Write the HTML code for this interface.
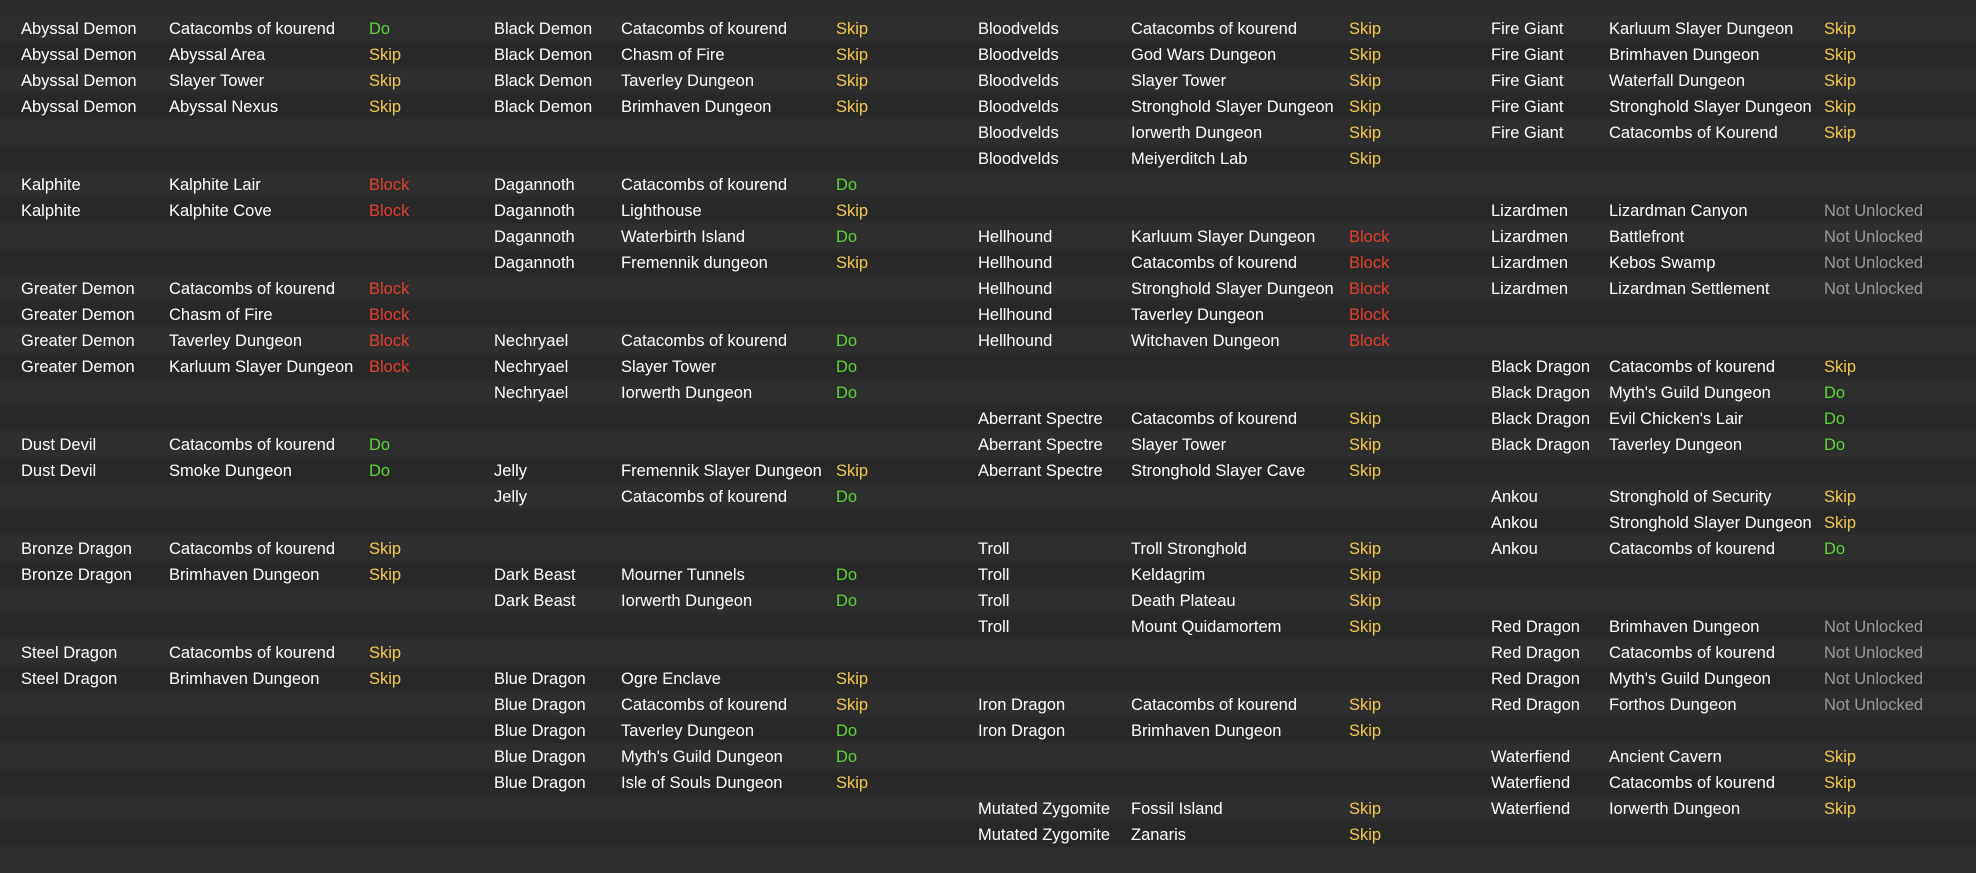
<!DOCTYPE html>
<html><head><meta charset="utf-8"><style>
html,body{margin:0;padding:0;width:1976px;height:861px;overflow:hidden;background:#2a2a2a;font-family:"Liberation Sans",Arial,sans-serif;font-size:16.5px;color:#fff}
.r{position:absolute;left:0;width:1976px;height:26px;line-height:23px;background:#2e2e2e}
.r:nth-child(even){background:#282828}
.r span{position:absolute;top:3px;white-space:nowrap}
.a{left:21px}.b{left:169px}.c{left:369px}
.d{left:494px}.e{left:621px}.f{left:836px}
.g{left:978px}.h{left:1131px}.i{left:1349px}
.j{left:1491px}.k{left:1609px}.l{left:1824px}
.D{color:#5bd636}.S{color:#f4c84e}.B{color:#e5402e}.N{color:#9a9a9a}
</style></head><body><div id="t">
<div class="r" style="top:15px"><span class="a">Abyssal Demon</span><span class="b">Catacombs of kourend</span><span class="c D">Do</span><span class="d">Black Demon</span><span class="e">Catacombs of kourend</span><span class="f S">Skip</span><span class="g">Bloodvelds</span><span class="h">Catacombs of kourend</span><span class="i S">Skip</span><span class="j">Fire Giant</span><span class="k">Karluum Slayer Dungeon</span><span class="l S">Skip</span></div>
<div class="r" style="top:41px"><span class="a">Abyssal Demon</span><span class="b">Abyssal Area</span><span class="c S">Skip</span><span class="d">Black Demon</span><span class="e">Chasm of Fire</span><span class="f S">Skip</span><span class="g">Bloodvelds</span><span class="h">God Wars Dungeon</span><span class="i S">Skip</span><span class="j">Fire Giant</span><span class="k">Brimhaven Dungeon</span><span class="l S">Skip</span></div>
<div class="r" style="top:67px"><span class="a">Abyssal Demon</span><span class="b">Slayer Tower</span><span class="c S">Skip</span><span class="d">Black Demon</span><span class="e">Taverley Dungeon</span><span class="f S">Skip</span><span class="g">Bloodvelds</span><span class="h">Slayer Tower</span><span class="i S">Skip</span><span class="j">Fire Giant</span><span class="k">Waterfall Dungeon</span><span class="l S">Skip</span></div>
<div class="r" style="top:93px"><span class="a">Abyssal Demon</span><span class="b">Abyssal Nexus</span><span class="c S">Skip</span><span class="d">Black Demon</span><span class="e">Brimhaven Dungeon</span><span class="f S">Skip</span><span class="g">Bloodvelds</span><span class="h">Stronghold Slayer Dungeon</span><span class="i S">Skip</span><span class="j">Fire Giant</span><span class="k">Stronghold Slayer Dungeon</span><span class="l S">Skip</span></div>
<div class="r" style="top:119px"><span class="g">Bloodvelds</span><span class="h">Iorwerth Dungeon</span><span class="i S">Skip</span><span class="j">Fire Giant</span><span class="k">Catacombs of Kourend</span><span class="l S">Skip</span></div>
<div class="r" style="top:145px"><span class="g">Bloodvelds</span><span class="h">Meiyerditch Lab</span><span class="i S">Skip</span></div>
<div class="r" style="top:171px"><span class="a">Kalphite</span><span class="b">Kalphite Lair</span><span class="c B">Block</span><span class="d">Dagannoth</span><span class="e">Catacombs of kourend</span><span class="f D">Do</span></div>
<div class="r" style="top:197px"><span class="a">Kalphite</span><span class="b">Kalphite Cove</span><span class="c B">Block</span><span class="d">Dagannoth</span><span class="e">Lighthouse</span><span class="f S">Skip</span><span class="j">Lizardmen</span><span class="k">Lizardman Canyon</span><span class="l N">Not Unlocked</span></div>
<div class="r" style="top:223px"><span class="d">Dagannoth</span><span class="e">Waterbirth Island</span><span class="f D">Do</span><span class="g">Hellhound</span><span class="h">Karluum Slayer Dungeon</span><span class="i B">Block</span><span class="j">Lizardmen</span><span class="k">Battlefront</span><span class="l N">Not Unlocked</span></div>
<div class="r" style="top:249px"><span class="d">Dagannoth</span><span class="e">Fremennik dungeon</span><span class="f S">Skip</span><span class="g">Hellhound</span><span class="h">Catacombs of kourend</span><span class="i B">Block</span><span class="j">Lizardmen</span><span class="k">Kebos Swamp</span><span class="l N">Not Unlocked</span></div>
<div class="r" style="top:275px"><span class="a">Greater Demon</span><span class="b">Catacombs of kourend</span><span class="c B">Block</span><span class="g">Hellhound</span><span class="h">Stronghold Slayer Dungeon</span><span class="i B">Block</span><span class="j">Lizardmen</span><span class="k">Lizardman Settlement</span><span class="l N">Not Unlocked</span></div>
<div class="r" style="top:301px"><span class="a">Greater Demon</span><span class="b">Chasm of Fire</span><span class="c B">Block</span><span class="g">Hellhound</span><span class="h">Taverley Dungeon</span><span class="i B">Block</span></div>
<div class="r" style="top:327px"><span class="a">Greater Demon</span><span class="b">Taverley Dungeon</span><span class="c B">Block</span><span class="d">Nechryael</span><span class="e">Catacombs of kourend</span><span class="f D">Do</span><span class="g">Hellhound</span><span class="h">Witchaven Dungeon</span><span class="i B">Block</span></div>
<div class="r" style="top:353px"><span class="a">Greater Demon</span><span class="b">Karluum Slayer Dungeon</span><span class="c B">Block</span><span class="d">Nechryael</span><span class="e">Slayer Tower</span><span class="f D">Do</span><span class="j">Black Dragon</span><span class="k">Catacombs of kourend</span><span class="l S">Skip</span></div>
<div class="r" style="top:379px"><span class="d">Nechryael</span><span class="e">Iorwerth Dungeon</span><span class="f D">Do</span><span class="j">Black Dragon</span><span class="k">Myth's Guild Dungeon</span><span class="l D">Do</span></div>
<div class="r" style="top:405px"><span class="g">Aberrant Spectre</span><span class="h">Catacombs of kourend</span><span class="i S">Skip</span><span class="j">Black Dragon</span><span class="k">Evil Chicken's Lair</span><span class="l D">Do</span></div>
<div class="r" style="top:431px"><span class="a">Dust Devil</span><span class="b">Catacombs of kourend</span><span class="c D">Do</span><span class="g">Aberrant Spectre</span><span class="h">Slayer Tower</span><span class="i S">Skip</span><span class="j">Black Dragon</span><span class="k">Taverley Dungeon</span><span class="l D">Do</span></div>
<div class="r" style="top:457px"><span class="a">Dust Devil</span><span class="b">Smoke Dungeon</span><span class="c D">Do</span><span class="d">Jelly</span><span class="e">Fremennik Slayer Dungeon</span><span class="f S">Skip</span><span class="g">Aberrant Spectre</span><span class="h">Stronghold Slayer Cave</span><span class="i S">Skip</span></div>
<div class="r" style="top:483px"><span class="d">Jelly</span><span class="e">Catacombs of kourend</span><span class="f D">Do</span><span class="j">Ankou</span><span class="k">Stronghold of Security</span><span class="l S">Skip</span></div>
<div class="r" style="top:509px"><span class="j">Ankou</span><span class="k">Stronghold Slayer Dungeon</span><span class="l S">Skip</span></div>
<div class="r" style="top:535px"><span class="a">Bronze Dragon</span><span class="b">Catacombs of kourend</span><span class="c S">Skip</span><span class="g">Troll</span><span class="h">Troll Stronghold</span><span class="i S">Skip</span><span class="j">Ankou</span><span class="k">Catacombs of kourend</span><span class="l D">Do</span></div>
<div class="r" style="top:561px"><span class="a">Bronze Dragon</span><span class="b">Brimhaven Dungeon</span><span class="c S">Skip</span><span class="d">Dark Beast</span><span class="e">Mourner Tunnels</span><span class="f D">Do</span><span class="g">Troll</span><span class="h">Keldagrim</span><span class="i S">Skip</span></div>
<div class="r" style="top:587px"><span class="d">Dark Beast</span><span class="e">Iorwerth Dungeon</span><span class="f D">Do</span><span class="g">Troll</span><span class="h">Death Plateau</span><span class="i S">Skip</span></div>
<div class="r" style="top:613px"><span class="g">Troll</span><span class="h">Mount Quidamortem</span><span class="i S">Skip</span><span class="j">Red Dragon</span><span class="k">Brimhaven Dungeon</span><span class="l N">Not Unlocked</span></div>
<div class="r" style="top:639px"><span class="a">Steel Dragon</span><span class="b">Catacombs of kourend</span><span class="c S">Skip</span><span class="j">Red Dragon</span><span class="k">Catacombs of kourend</span><span class="l N">Not Unlocked</span></div>
<div class="r" style="top:665px"><span class="a">Steel Dragon</span><span class="b">Brimhaven Dungeon</span><span class="c S">Skip</span><span class="d">Blue Dragon</span><span class="e">Ogre Enclave</span><span class="f S">Skip</span><span class="j">Red Dragon</span><span class="k">Myth's Guild Dungeon</span><span class="l N">Not Unlocked</span></div>
<div class="r" style="top:691px"><span class="d">Blue Dragon</span><span class="e">Catacombs of kourend</span><span class="f S">Skip</span><span class="g">Iron Dragon</span><span class="h">Catacombs of kourend</span><span class="i S">Skip</span><span class="j">Red Dragon</span><span class="k">Forthos Dungeon</span><span class="l N">Not Unlocked</span></div>
<div class="r" style="top:717px"><span class="d">Blue Dragon</span><span class="e">Taverley Dungeon</span><span class="f D">Do</span><span class="g">Iron Dragon</span><span class="h">Brimhaven Dungeon</span><span class="i S">Skip</span></div>
<div class="r" style="top:743px"><span class="d">Blue Dragon</span><span class="e">Myth's Guild Dungeon</span><span class="f D">Do</span><span class="j">Waterfiend</span><span class="k">Ancient Cavern</span><span class="l S">Skip</span></div>
<div class="r" style="top:769px"><span class="d">Blue Dragon</span><span class="e">Isle of Souls Dungeon</span><span class="f S">Skip</span><span class="j">Waterfiend</span><span class="k">Catacombs of kourend</span><span class="l S">Skip</span></div>
<div class="r" style="top:795px"><span class="g">Mutated Zygomite</span><span class="h">Fossil Island</span><span class="i S">Skip</span><span class="j">Waterfiend</span><span class="k">Iorwerth Dungeon</span><span class="l S">Skip</span></div>
<div class="r" style="top:821px"><span class="g">Mutated Zygomite</span><span class="h">Zanaris</span><span class="i S">Skip</span></div>
<div class="r" style="top:847px"></div>
</div></body></html>
